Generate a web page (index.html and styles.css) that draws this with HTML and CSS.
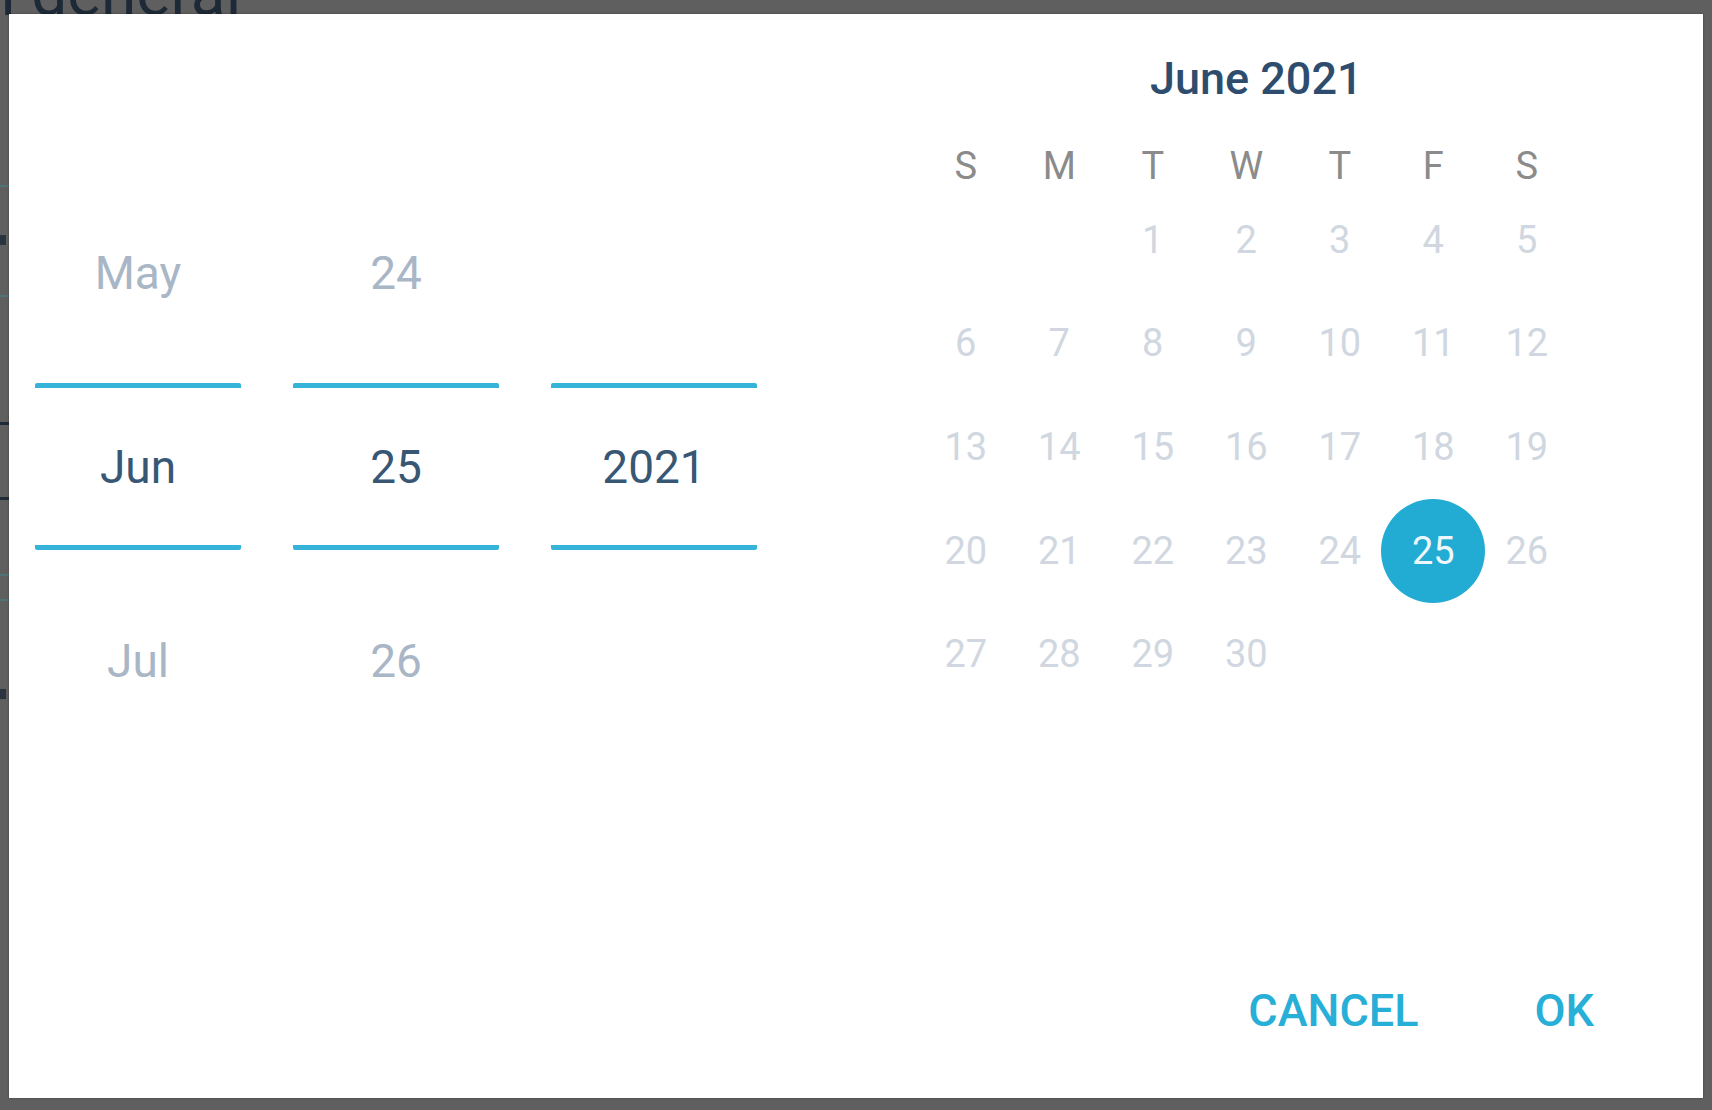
FILE: index.html
```html
<!DOCTYPE html>
<html>
<head>
<meta charset="utf-8">
<link rel="stylesheet" href="styles.css">
</head>
<body>
<div class="backdrop">
  <div class="bg-title">n general</div>
  <div class="bg-marks">
    <div class="mark teal m1"></div>
    <div class="mark dark-glyph m2"></div>
    <div class="mark teal m3"></div>
    <div class="mark dark m4"></div>
    <div class="mark dark m5"></div>
    <div class="mark teal m6"></div>
    <div class="mark teal m7"></div>
    <div class="mark dark-glyph m8"></div>
  </div>
</div>
<div class="dialog">
  <div class="dialog-main">
    <div class="wheels">
      <div class="wheel">
        <div class="wheel-item">May</div>
        <div class="wheel-item selected">Jun</div>
        <div class="wheel-item">Jul</div>
      </div>
      <div class="wheel">
        <div class="wheel-item">24</div>
        <div class="wheel-item selected">25</div>
        <div class="wheel-item">26</div>
      </div>
      <div class="wheel">
        <div class="wheel-item"></div>
        <div class="wheel-item selected">2021</div>
        <div class="wheel-item"></div>
      </div>
    </div>
    <div class="calendar">
      <div class="cal-title">June 2021</div>
      <div class="cal-grid">
        <div class="wd">S</div><div class="wd">M</div><div class="wd">T</div><div class="wd">W</div><div class="wd">T</div><div class="wd">F</div><div class="wd">S</div>
        <div class="day"></div><div class="day"></div><div class="day">1</div><div class="day">2</div><div class="day">3</div><div class="day">4</div><div class="day">5</div>
        <div class="day">6</div><div class="day">7</div><div class="day">8</div><div class="day">9</div><div class="day">10</div><div class="day">11</div><div class="day">12</div>
        <div class="day">13</div><div class="day">14</div><div class="day">15</div><div class="day">16</div><div class="day">17</div><div class="day">18</div><div class="day">19</div>
        <div class="day">20</div><div class="day">21</div><div class="day">22</div><div class="day">23</div><div class="day">24</div><div class="day"><span class="sel">25</span></div><div class="day">26</div>
        <div class="day">27</div><div class="day">28</div><div class="day">29</div><div class="day">30</div><div class="day"></div><div class="day"></div><div class="day"></div>
      </div>
    </div>
  </div>
  <div class="dialog-footer">
    <span class="btn">CANCEL</span>
    <span class="btn">OK</span>
  </div>
</div>
</body>
</html>
```

FILE: styles.css
```css
html, body {
  margin: 0;
  padding: 0;
}
body {
  width: 1712px;
  height: 1110px;
  background: #5f5f5f;
  overflow: hidden;
  position: relative;
  font-family: Roboto, "Noto Sans", "Liberation Sans", sans-serif;
}
.backdrop {
  position: absolute;
  left: 0;
  top: 0;
  width: 1712px;
  height: 1110px;
}
.bg-title {
  margin-top: -38px;
  margin-left: -20px;
  font-size: 64px;
  line-height: 64px;
  color: #1d2936;
  white-space: nowrap;
}
.bg-marks {
  display: flex;
  flex-direction: column;
  width: 9px;
}
.mark {
  width: 9px;
  height: 2px;
}
.teal { background: #4f7375; }
.dark { background: #1f2b37; height: 3px; }
.dark-glyph { background: #2a3440; height: 10px; width: 6px; }
.m1 { margin-top: 159px; }
.m2 { margin-top: 48px; }
.m3 { margin-top: 50px; }
.m4 { margin-top: 125px; }
.m5 { margin-top: 72px; }
.m6 { margin-top: 74px; }
.m7 { margin-top: 23px; }
.m8 { margin-top: 88px; }

.dialog {
  position: absolute;
  left: 9px;
  top: 14px;
  width: 1694px;
  height: 1084px;
  background: #ffffff;
  box-shadow: 0 0 2px rgba(0,0,0,0.35);
  display: flex;
  flex-direction: column;
}
.dialog-main {
  flex: 1;
  display: flex;
  padding-left: 26px;
  gap: 163px;
}
.wheels {
  display: flex;
  gap: 52px;
  padding-top: 175px;
}
.wheel {
  width: 206px;
  display: flex;
  flex-direction: column;
  gap: 27px;
}
.wheel-item {
  height: 167px;
  box-sizing: border-box;
  display: flex;
  align-items: center;
  justify-content: center;
  font-size: 46px;
  color: #a9b6c6;
}
.wheel-item.selected {
  color: #385775;
  border-top: 5px solid #36b3d9;
  border-bottom: 5px solid #36b3d9;
  border-radius: 2px;
}
.calendar {
  width: 654.5px;
  padding-top: 35px;
  display: flex;
  flex-direction: column;
}
.cal-title {
  height: 60px;
  line-height: 60px;
  text-align: center;
  padding-left: 18px;
  font-size: 45px;
  font-weight: 500;
  color: #2e4d6e;
}
.cal-grid {
  margin-top: 34px;
  display: grid;
  grid-template-columns: repeat(7, 93.5px);
  grid-template-rows: 45px repeat(5, 103.6px);
  margin-left: -1px;
}
.wd {
  display: flex;
  align-items: center;
  justify-content: center;
  font-size: 38px;
  color: #8b8b8b;
}
.day {
  display: flex;
  align-items: center;
  justify-content: center;
  font-size: 38px;
  color: #d0d7e0;
}
.sel {
  flex: none;
  width: 104px;
  height: 104px;
  border-radius: 50%;
  background: #22acd3;
  color: #eef8fb;
  display: flex;
  align-items: center;
  justify-content: center;
}
.dialog-footer {
  height: 60px;
  padding-bottom: 57px;
  padding-right: 109px;
  display: flex;
  justify-content: flex-end;
  align-items: center;
  gap: 116px;
}
.btn {
  font-size: 45px;
  font-weight: 500;
  color: #27afd7;
  line-height: 60px;
}
```
